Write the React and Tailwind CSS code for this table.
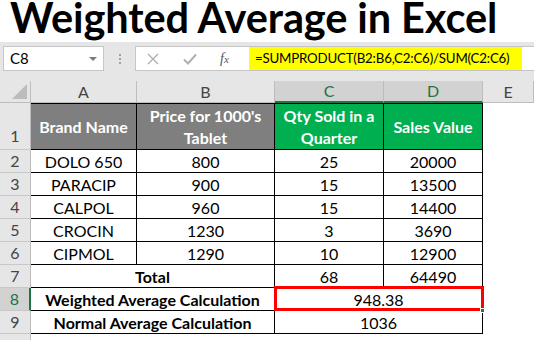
import React from "react";

const FONT = { fontFamily: "Lato, 'Noto Sans', sans-serif" };

const RowHead = ({ n, active = false, tall = false }) => (
  <div
    className={`flex justify-center border-b border-[#c8c8c8] text-[16px] ${
      tall ? "items-end pb-[1px]" : "items-center"
    } ${
      active
        ? "bg-[#d2d2d2] text-[#217346] border-r-2 border-r-[#217346]"
        : "bg-[#e6e6e6] text-[#444] border-r border-r-[#bdbdbd]"
    }`}
  >
    {n}
  </div>
);

const ColHead = ({ label, active = false }) => (
  <div
    className={`flex items-center justify-center border-r border-[#bdbdbd] text-[16px] ${
      active
        ? "bg-[#d2d2d2] text-[#217346] border-b-2 border-b-[#217346]"
        : "bg-[#e6e6e6] text-[#444] border-b border-b-[#bdbdbd]"
    }`}
  >
    {label}
  </div>
);

const Cell = ({ children, bold = false, span = false, className = "" }) => (
  <div
    className={`flex items-center justify-center pt-[1px] border-r border-b border-black bg-white text-[16px] text-black leading-none ${
      bold ? "font-bold" : ""
    } ${span ? "col-span-2" : ""} ${className}`}
  >
    {children}
  </div>
);

const HeadCell = ({ children, green = false }) => (
  <div
    className={`flex items-center justify-center text-center border-r border-t border-b border-black text-[16px] font-bold text-white leading-[22px] ${
      green ? "bg-[#00b050]" : "bg-[#7f7f7f]"
    }`}
  >
    {children}
  </div>
);

const rows = [
  ["DOLO 650", "800", "25", "20000"],
  ["PARACIP", "900", "15", "13500"],
  ["CALPOL", "960", "15", "14400"],
  ["CROCIN", "1230", "3", "3690"],
  ["CIPMOL", "1290", "10", "12900"],
];

export default function App() {
  return (
    <div className="w-[534px] h-[340px] overflow-hidden bg-white" style={FONT}>
      {/* title */}
      <div className="h-[42px] pl-[10px]">
        <h1 className="text-[41.5px] font-bold text-black leading-[34px] tracking-[-0.1px] whitespace-nowrap">
          Weighted Average in Excel
        </h1>
      </div>

      {/* formula bar */}
      <div className="h-[39px] bg-[#e6e6e6] flex items-start pt-[4px]">
        <div className="ml-[3px] w-[101px] h-[25px] bg-white border border-[#c6c6c6] flex items-center justify-between pl-[6px] pr-[6px] text-[15px] text-black">
          <span>C8</span>
          <span className="w-0 h-0 border-l-[4px] border-r-[4px] border-t-[4px] border-l-transparent border-r-transparent border-t-[#7a7a7a]" />
        </div>
        <div className="w-[31px] h-[25px] flex flex-col items-center justify-center gap-[2px]">
          <span className="w-[2px] h-[2px] bg-[#a0a0a0]" />
          <span className="w-[2px] h-[2px] bg-[#a0a0a0]" />
          <span className="w-[2px] h-[2px] bg-[#a0a0a0]" />
        </div>
        <div className="w-[114px] h-[25px] bg-white border border-[#c6c6c6] border-r-0 flex items-center">
          <svg width="12" height="12" viewBox="0 0 12 12" className="ml-[11px]">
            <path d="M1 1 L11 11 M11 1 L1 11" stroke="#b0b0b0" strokeWidth="1.4" fill="none" />
          </svg>
          <svg width="14" height="12" viewBox="0 0 14 12" className="ml-[24px]">
            <path d="M1 6.5 L5 10.5 L13 1.5" stroke="#b0b0b0" strokeWidth="2" fill="none" />
          </svg>
          <span className="ml-[23px] text-[14px] italic text-[#555]" style={{ fontFamily: "'Liberation Serif', serif" }}>
            f<span className="text-[11px]">x</span>
          </span>
        </div>
        <div className="flex-1 h-[25px] bg-white border-y border-[#c6c6c6] flex">
          <div className="w-[273px] h-full bg-[#ffff00] flex items-center pl-[6px] text-[13.3px] text-black tracking-[-0.2px] whitespace-nowrap overflow-hidden">
            =SUMPRODUCT(B2:B6,C2:C6)/SUM(C2:C6)
          </div>
        </div>
      </div>

      {/* sheet */}
      <div className="grid grid-cols-[31px_106px_138px_109px_99px_1fr] grid-rows-[22px_47px_repeat(8,23px)_1fr] h-[259px]">
        {/* column headers */}
        <div className="relative bg-[#e6e6e6] border-r border-b border-[#bdbdbd]">
          <svg width="15" height="15" viewBox="0 0 15 15" className="absolute right-[3px] bottom-[3px]">
            <polygon points="15,0 15,15 0,15" fill="#bcbcbc" />
          </svg>
        </div>
        <ColHead label="A" />
        <ColHead label="B" />
        <ColHead label="C" active />
        <ColHead label="D" active />
        <ColHead label="E" />

        {/* row 1 */}
        <RowHead n="1" tall />
        <HeadCell>Brand Name</HeadCell>
        <HeadCell>
          Price for 1000's
          <br />
          Tablet
        </HeadCell>
        <HeadCell green>
          Qty Sold in a
          <br />
          Quarter
        </HeadCell>
        <HeadCell green>Sales Value</HeadCell>
        <div />

        {rows.map((r, i) => (
          <React.Fragment key={r[0]}>
            <RowHead n={i + 2} />
            {r.map((v) => (
              <Cell key={v}>{v}</Cell>
            ))}
            <div />
          </React.Fragment>
        ))}

        {/* row 7 */}
        <RowHead n="7" />
        <Cell bold span>Total</Cell>
        <Cell>68</Cell>
        <Cell>64490</Cell>
        <div />

        {/* row 8 */}
        <RowHead n="8" active />
        <Cell bold span>Weighted Average Calculation</Cell>
        <Cell span className="relative overflow-visible">
          948.38
          <span className="absolute -top-[2px] -left-[1px] -right-[2px] -bottom-[1px] border-[3px] border-[#ff0000]" />
          <span className="absolute -right-[3px] -bottom-[3px] w-[5px] h-[5px] bg-[#217346] border border-white" />
        </Cell>
        <div />

        {/* row 9 */}
        <RowHead n="9" />
        <Cell bold span>Normal Average Calculation</Cell>
        <Cell span>1036</Cell>
        <div />

        {/* row 10 (partial) */}
        <div className="bg-[#e6e6e6] border-r border-[#bdbdbd]" />
        <div className="col-span-5" />
      </div>
    </div>
  );
}
